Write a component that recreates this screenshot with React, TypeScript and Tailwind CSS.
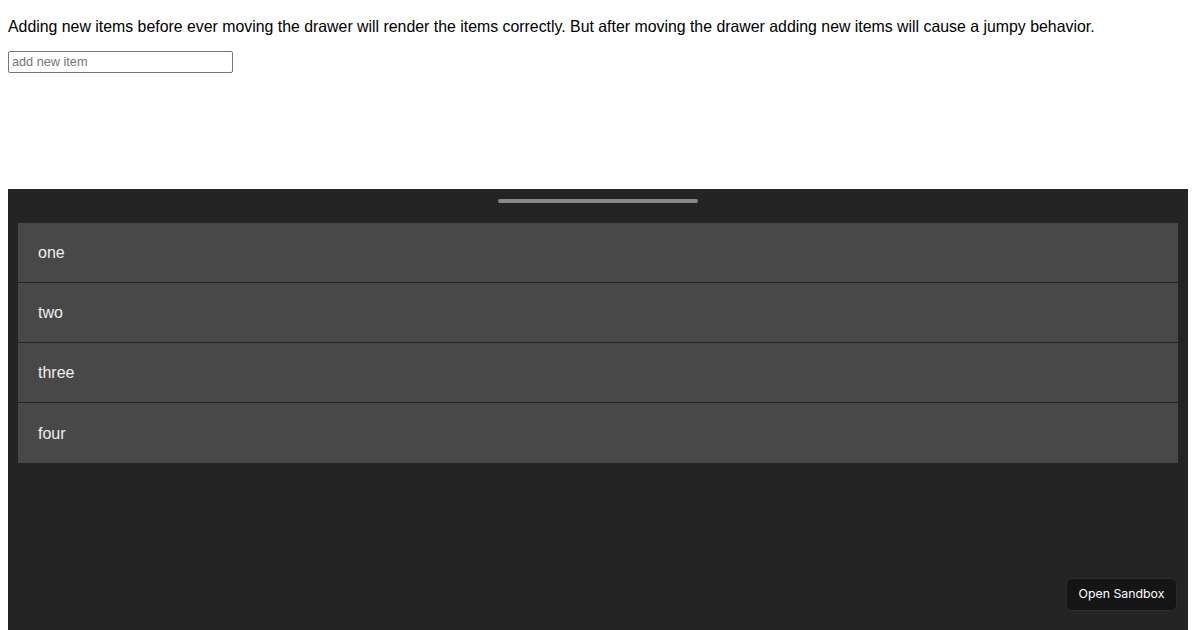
export default function App() {
  const items = ["one", "two", "three", "four"];
  return (
    <div className="m-2 font-['Liberation_Sans',Arial,sans-serif] text-black">
      <p className="mt-4 mb-[15px] text-[15.87px] leading-[19px] pt-px">
        Adding new items before ever moving the drawer will render the items correctly. But after moving the drawer adding new items will cause a jumpy behavior.
      </p>
      <input
        placeholder="add new item"
        className="block w-[225px] h-[22px] border border-[#767676] rounded-[2px] px-[3px] text-[12.7px] placeholder:text-[#757575] font-['Liberation_Sans',Arial,sans-serif]"
      />
      <div className="mt-[116px] w-[1180px] h-[460px] bg-[#242424] flex flex-col relative">
        <div className="flex justify-center pt-[10px] pb-[20px]">
          <div className="w-[200px] h-[4px] rounded-full bg-[#888888]" />
        </div>
        <div className="mx-[10px] flex flex-col">
          {items.map((it, i) => (
            <div
              key={it}
              className={`h-[60px] bg-[#484848] text-[#f0f0f0] text-base flex items-center pl-5 pt-px ${i < items.length - 1 ? "border-b border-[#242424]" : ""}`}
            >
              {it}
            </div>
          ))}
        </div>
        <button className="absolute left-[1058px] top-[389px] w-[111px] h-[33px] rounded-md bg-[#151515] border border-[#2c2c2c] text-white text-[12.3px] font-['Inter',sans-serif]">
          Open Sandbox
        </button>
      </div>
    </div>
  );
}
